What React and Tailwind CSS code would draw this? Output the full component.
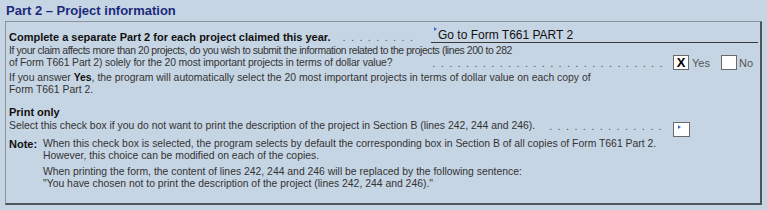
import React from 'react';

const Dots = ({ className = '' }) => (
    <span className={`flex-1 min-w-0 overflow-hidden whitespace-nowrap text-[11px] font-normal tracking-[1.15px] text-[#555] ${className}`}>
        {'. '.repeat(80)}
    </span>
);

const Arrow = ({ className = '' }) => (
    <span className={`absolute w-0 h-0 border-y-[2.5px] border-y-transparent border-l-[3px] border-l-[#3d6cd8] ${className}`} />
);

const CheckBox = ({ checked, arrow, className = '' }) => (
    <span className={`relative shrink-0 flex items-center justify-center w-[16px] h-[15px] bg-white border border-[#6a6a6a] ${className}`}>
        {checked && <span className="text-[13px] leading-[13px] font-bold text-black">X</span>}
        {arrow && <Arrow className="left-[4px] top-[2px]" />}
    </span>
);

const App = () => {
    return (
        <div className="w-[767px] h-[210px] overflow-hidden bg-[#c6d5e4] px-[5px] font-['Liberation_Sans',Arial,sans-serif] text-[10.4px] leading-[12px] text-[#333]">
            <h2 className="h-[21px] pl-[1px] text-[13px] leading-[21px] font-bold text-[#1b2a7c]">
                Part 2 – Project information
            </h2>

            <div className="w-[757px] h-[184px] border-t border-l border-[#8a929a] border-r-2 border-b-2 border-r-[#4c545c] border-b-[#4c545c] pl-[3px] pr-[2px]">
                {/* go to form */}
                <div className="flex h-[21px] items-end">
                    <div className="flex flex-1 min-w-0 items-end">
                        <span className="shrink-0 text-[11px] font-bold text-[#111]">Complete a separate Part 2 for each project claimed this year.</span>
                        <Dots className="ml-[12px] mr-[16px]" />
                    </div>
                    <div className="relative shrink-0 w-[327px] h-[20px] flex items-end border-b border-[#3a3a3a]">
                        <Arrow className="left-[3px] top-[4px]" />
                        <span className="pl-[7px] text-[12px] leading-[14px] text-[#111]">Go to Form T661 PART 2</span>
                    </div>
                </div>

                {/* 20 projects question */}
                <div className="mt-[2px] flex">
                    <div className="flex-1 min-w-0">
                        <div className="whitespace-nowrap tracking-[-0.4px]">If your claim affects more than 20 projects, do you wish to submit the information related to the projects (lines 200 to 282</div>
                        <div className="flex">
                            <span className="shrink-0 tracking-[-0.15px]">of Form T661 Part 2) solely for the 20 most important projects in terms of dollar value?</span>
                            <Dots className="ml-[40px] mr-[8px]" />
                        </div>
                    </div>
                    <div className="shrink-0 w-[85px] flex items-end">
                        <CheckBox checked className="-mb-[1px]" />
                        <span className="ml-[3px] text-[11px] text-[#555]">Yes</span>
                        <CheckBox className="ml-[11px] -mb-[1px]" />
                        <span className="ml-[2px] text-[11px] text-[#555]">No</span>
                    </div>
                </div>

                <p className="mt-[3px]">
                    If you answer <b className="text-[#111]">Yes</b>, the program will automatically select the 20 most important projects in terms of dollar value on each copy of
                    <br />
                    Form T661 Part 2.
                </p>

                <div className="mt-[10px] text-[11px] font-bold text-[#111]">Print only</div>
                <div className="mt-[2px] flex items-start">
                    <div className="flex flex-1 min-w-0">
                        <span className="shrink-0">Select this check box if you do not want to print the description of the project in Section B (lines 242, 244 and 246).</span>
                        <Dots className="ml-[14px] mr-[8px]" />
                    </div>
                    <div className="shrink-0 w-[85px]">
                        <CheckBox arrow className="mt-[2px] w-[17px]" />
                    </div>
                </div>

                <div className="mt-[1px] flex">
                    <span className="shrink-0 w-[34px] text-[11px] font-bold text-[#111]">Note:</span>
                    <div>
                        <div>When this check box is selected, the program selects by default the corresponding box in Section B of all copies of Form T661 Part 2.</div>
                        <div>However, this choice can be modified on each of the copies.</div>
                        <div className="mt-[4px]">When printing the form, the content of lines 242, 244 and 246 will be replaced by the following sentence:</div>
                        <div>"You have chosen not to print the description of the project (lines 242, 244 and 246)."</div>
                    </div>
                </div>
            </div>
        </div>
    );
};

export default App;
